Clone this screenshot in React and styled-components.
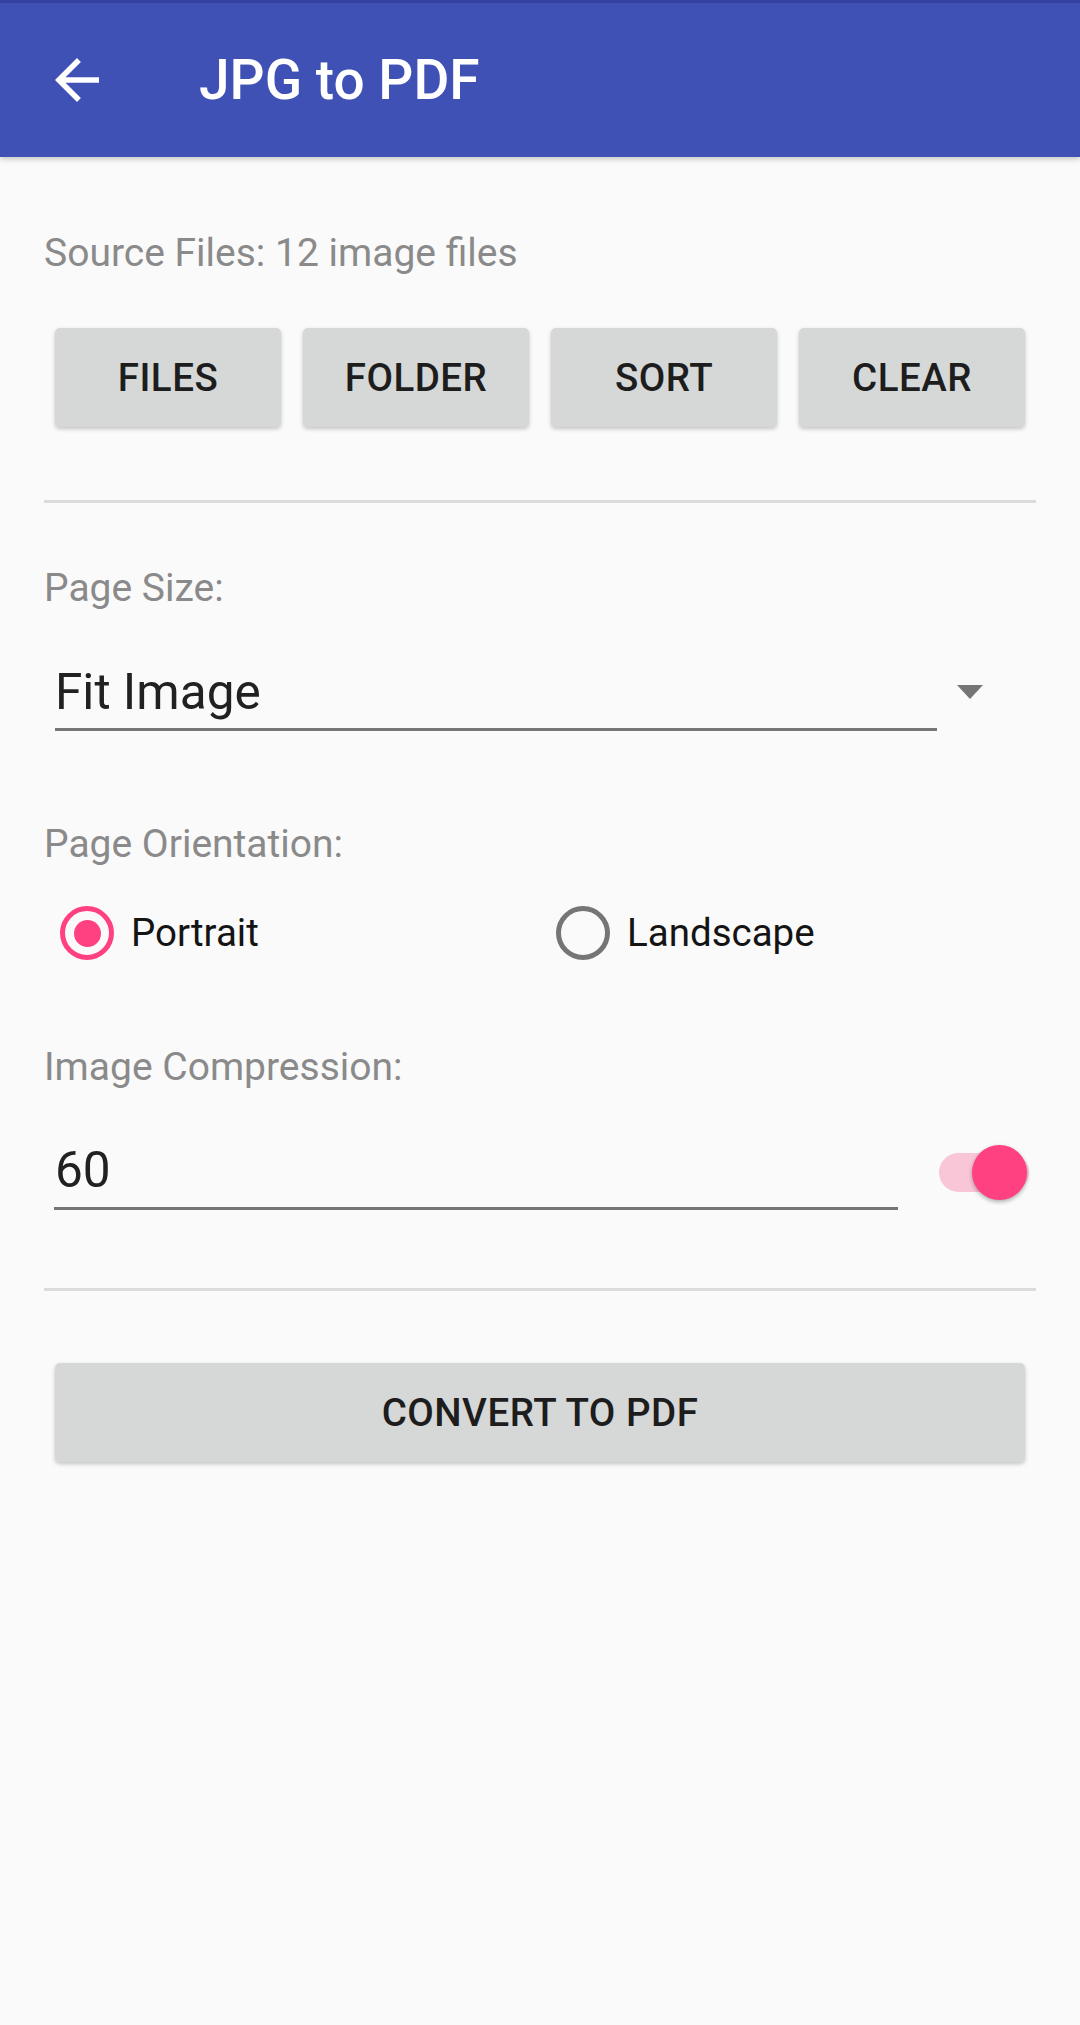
import React, { useState } from "react";
import styled, { createGlobalStyle } from "styled-components";

const GlobalStyle = createGlobalStyle`
  html, body {
    margin: 0;
    padding: 0;
    background: #fafafa;
  }
  body {
    font-family: Roboto, "Noto Sans", "Liberation Sans", sans-serif;
    -webkit-font-smoothing: antialiased;
  }
  * {
    box-sizing: border-box;
  }
`;

const Page = styled.div`
  min-height: 2025px;
  background: #fafafa;
`;

const AppBar = styled.header`
  position: relative;
  z-index: 1;
  height: 157px;
  display: flex;
  align-items: center;
  background: #3f51b5;
  border-top: 3px solid #3341a3;
  box-shadow: 0 2px 6px rgba(0, 0, 0, 0.22);
`;

const BackButton = styled.button`
  width: 66px;
  height: 66px;
  margin-left: 44px;
  padding: 0;
  border: none;
  background: transparent;
  display: flex;
  align-items: center;
  justify-content: center;
  cursor: pointer;
`;

const Title = styled.h1`
  margin: 0 0 0 89px;
  font-size: 55px;
  line-height: 66px;
  font-weight: 500;
  color: #ffffff;
`;

const Content = styled.main`
  padding: 71px 44px 0;
`;

const Label = styled.div`
  margin-top: ${(p) => p.top || 0}px;
  font-size: 39px;
  line-height: 50px;
  color: #8a8a8a;
`;

const ButtonRow = styled.div`
  margin-top: 50px;
  display: grid;
  grid-template-columns: repeat(4, 1fr);
`;

const RaisedButton = styled.button`
  height: 99px;
  margin: 0 11px;
  border: none;
  border-radius: 5px;
  background: #d6d7d7;
  box-shadow: 0 2px 4px rgba(0, 0, 0, 0.22);
  font-family: Roboto, "Liberation Sans", sans-serif;
  font-size: 38.5px;
  font-weight: 500;
  letter-spacing: 0.5px;
  color: #1d1d1d;
  text-transform: uppercase;
  cursor: pointer;
`;

const WideButton = styled(RaisedButton)`
  display: block;
  width: calc(100% - 22px);
  margin-top: 72px;
`;

const Divider = styled.hr`
  margin: ${(p) => p.top}px 0 0;
  height: 3px;
  border: none;
  background: #dcdcdc;
`;

const SpinnerRow = styled.div`
  display: flex;
  align-items: flex-start;
  margin-top: 49px;
`;

const SpinnerField = styled.div`
  flex: 1;
  margin-left: 11px;
  padding: 0 0 6px 0;
  border-bottom: 3px solid #767676;
  font-size: 49.5px;
  line-height: 60px;
  color: #212121;
`;

const SpinnerArrow = styled.div`
  width: 99px;
  padding: 23px 0 0 20px;
  display: flex;
`;

const RadioGroup = styled.div`
  margin-top: 37px;
  display: grid;
  grid-template-columns: 1fr 1fr;
`;

const RadioOption = styled.label`
  display: flex;
  align-items: center;
  height: 54px;
  font-size: 38.5px;
  line-height: 54px;
  color: #141414;
  cursor: pointer;
`;

const RadioCircle = styled.span`
  width: 54px;
  height: 54px;
  margin: 0 17px 0 16px;
  border-radius: 50%;
  border: 5px solid ${(p) => (p.checked ? "#ff4081" : "#757575")};
  display: flex;
  align-items: center;
  justify-content: center;

  &::after {
    content: "";
    width: 27px;
    height: 27px;
    border-radius: 50%;
    background: ${(p) => (p.checked ? "#ff4081" : "transparent")};
  }
`;

const CompressionRow = styled.div`
  display: flex;
  align-items: flex-start;
  margin-top: 48px;
`;

const EditField = styled.div`
  width: 844px;
  margin-left: 10px;
  padding: 0 0 7px 1px;
  border-bottom: 3px solid #767676;
  font-size: 49.5px;
  line-height: 60px;
  color: #212121;
`;

const Switch = styled.div`
  position: relative;
  width: 90px;
  height: 55px;
  margin: 5px 0 0 41px;
  cursor: pointer;
`;

const SwitchTrack = styled.span`
  position: absolute;
  left: 0;
  right: 0;
  top: 8px;
  height: 39px;
  border-radius: 20px;
  background: ${(p) => (p.on ? "#f9c6d7" : "#bdbdbd")};
`;

const SwitchThumb = styled.span`
  position: absolute;
  top: 0;
  ${(p) => (p.on ? "right: 2px;" : "left: -2px;")}
  width: 55px;
  height: 55px;
  border-radius: 50%;
  background: ${(p) => (p.on ? "#ff4081" : "#f1f1f1")};
  box-shadow: 0 2px 4px rgba(0, 0, 0, 0.3);
`;

const BackArrow = () => (
  <svg width="66" height="66" viewBox="0 0 24 24">
    <path
      fill="#ffffff"
      d="M20 11H7.83l5.59-5.59L12 4l-8 8 8 8 1.41-1.41L7.83 13H20v-2z"
    />
  </svg>
);

const DropTriangle = () => (
  <svg width="26" height="14" viewBox="0 0 26 14">
    <path fill="#757575" d="M0 0h26L13 14z" />
  </svg>
);

const App = () => {
  const [orientation, setOrientation] = useState("portrait");
  const [compress, setCompress] = useState(true);

  return (
    <Page>
      <GlobalStyle />
      <AppBar>
        <BackButton aria-label="Back">
          <BackArrow />
        </BackButton>
        <Title>JPG to PDF</Title>
      </AppBar>
      <Content>
        <Label>Source Files: 12 image files</Label>
        <ButtonRow>
          <RaisedButton>Files</RaisedButton>
          <RaisedButton>Folder</RaisedButton>
          <RaisedButton>Sort</RaisedButton>
          <RaisedButton>Clear</RaisedButton>
        </ButtonRow>

        <Divider top={73} />

        <Label top={60}>Page Size:</Label>
        <SpinnerRow>
          <SpinnerField>Fit Image</SpinnerField>
          <SpinnerArrow>
            <DropTriangle />
          </SpinnerArrow>
        </SpinnerRow>

        <Label top={88}>Page Orientation:</Label>
        <RadioGroup>
          <RadioOption onClick={() => setOrientation("portrait")}>
            <RadioCircle checked={orientation === "portrait"} />
            Portrait
          </RadioOption>
          <RadioOption onClick={() => setOrientation("landscape")}>
            <RadioCircle checked={orientation === "landscape"} />
            Landscape
          </RadioOption>
        </RadioGroup>

        <Label top={82}>Image Compression:</Label>
        <CompressionRow>
          <EditField>60</EditField>
          <Switch onClick={() => setCompress(!compress)}>
            <SwitchTrack on={compress ? 1 : 0} />
            <SwitchThumb on={compress ? 1 : 0} />
          </Switch>
        </CompressionRow>

        <Divider top={78} />

        <WideButton>Convert to PDF</WideButton>
      </Content>
    </Page>
  );
};

export default App;
